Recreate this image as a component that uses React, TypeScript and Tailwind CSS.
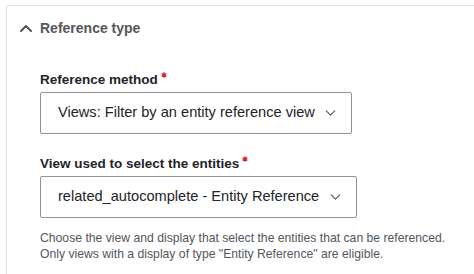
import { type ReactNode } from 'react'

const FONT = { fontFamily: '"Liberation Sans", Arial, sans-serif' }

function RequiredMark() {
  return (
    <svg
      viewBox="0 0 10 10"
      className="ml-[3px] inline-block h-[6px] w-[6px] -translate-y-[5px] align-middle"
      aria-hidden="true"
    >
      <path
        d="M5 0.5v9M1.1 2.75l7.8 4.5M1.1 7.25l7.8-4.5"
        stroke="#d8242b"
        strokeWidth="2.2"
      />
    </svg>
  )
}

function Chevron({ up = false, className = '' }: { up?: boolean; className?: string }) {
  return (
    <svg viewBox="0 0 12 7" className={className} fill="none" aria-hidden="true">
      <path
        d={up ? 'M1 6l5-5 5 5' : 'M1 1l5 5 5-5'}
        stroke="currentColor"
        strokeWidth={up ? 2 : 1.3}
        strokeLinecap="round"
        strokeLinejoin="round"
      />
    </svg>
  )
}

function Field({ label, value, width }: { label: string; value: string; width: string }) {
  return (
    <div>
      <div className="text-[13.5px] font-bold leading-[18px] text-[#232429]">
        {label}
        <RequiredMark />
      </div>
      <div
        className={`mt-[3px] flex h-[42px] items-center justify-between rounded-[2px] border border-[#8e929c] bg-white pl-[17px] pr-[15px] text-[14.6px] text-[#232429] ${width}`}
      >
        <span className="whitespace-nowrap">{value}</span>
        <Chevron className="h-[6px] w-[11px] text-[#55565b]" />
      </div>
    </div>
  )
}

function Details({ title, children }: { title: string; children: ReactNode }) {
  return (
    <div className="h-[300px] w-[500px] rounded-[2px] border border-[#e0e1e5] bg-white">
      <div className="flex h-[44px] items-center pl-[13px]">
        <Chevron up className="h-[7px] w-[12px] text-[#55565b]" />
        <span className="ml-[8px] text-[14px] font-bold text-[#55565b]">{title}</span>
      </div>
      <div className="pl-[33px]">{children}</div>
    </div>
  )
}

export default function App() {
  return (
    <div className="h-[274px] w-[474px] overflow-hidden bg-white pl-[6px] pt-[5px]" style={FONT}>
      <Details title="Reference type">
        <div className="mt-[21px]">
          <Field
            label="Reference method"
            value="Views: Filter by an entity reference view"
            width="w-[312px]"
          />
        </div>
        <div className="mt-[21px]">
          <Field
            label="View used to select the entities"
            value="related_autocomplete - Entity Reference"
            width="w-[317px]"
          />
        </div>
        <p className="mt-[12px] text-[12.2px] leading-[16px] text-[#545560]">
          Choose the view and display that select the entities that can be referenced.
          <br />
          Only views with a display of type "Entity Reference" are eligible.
        </p>
      </Details>
    </div>
  )
}
